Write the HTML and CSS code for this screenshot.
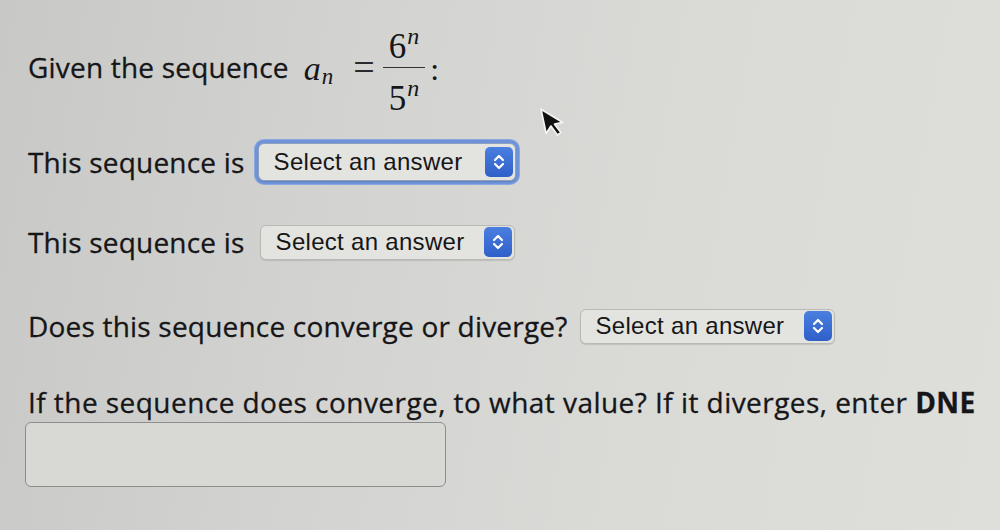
FILE: index.html
```html
<!DOCTYPE html>
<html>
<head>
<meta charset="utf-8">
<link rel="stylesheet" href="styles.css">
</head>
<body>
<div class="page">
  <div class="q1">
    <span class="txt">Given the sequence</span>
    <span class="math">
      <span class="var">a</span><span class="sub">n</span>
      <span class="eq">=</span>
      <span class="frac">
        <span class="num">6<span class="sup">n</span></span>
        <span class="den">5<span class="sup">n</span></span>
      </span>
      <span class="colon">:</span>
    </span>
  </div>

  <div class="row r2">
    <span class="txt">This sequence is</span>
    <span class="ring">
      <span class="select">
        <span class="label">Select an answer</span>
        <span class="stepper"><svg width="14" height="20" viewBox="0 0 14 20"><path d="M3 8 L7 4 L11 8 M3 12 L7 16 L11 12" fill="none" stroke="#fff" stroke-width="2.2" stroke-linecap="round" stroke-linejoin="round"/></svg></span>
      </span>
    </span>
  </div>

  <div class="row r3">
    <span class="txt">This sequence is</span>
    <span class="select">
      <span class="label">Select an answer</span>
      <span class="stepper"><svg width="14" height="20" viewBox="0 0 14 20"><path d="M3 8 L7 4 L11 8 M3 12 L7 16 L11 12" fill="none" stroke="#fff" stroke-width="2.2" stroke-linecap="round" stroke-linejoin="round"/></svg></span>
    </span>
  </div>

  <div class="row r4">
    <span class="txt">Does this sequence converge or diverge?</span>
    <span class="select">
      <span class="label">Select an answer</span>
      <span class="stepper"><svg width="14" height="20" viewBox="0 0 14 20"><path d="M3 8 L7 4 L11 8 M3 12 L7 16 L11 12" fill="none" stroke="#fff" stroke-width="2.2" stroke-linecap="round" stroke-linejoin="round"/></svg></span>
    </span>
  </div>

  <div class="r5">
    <div class="txt long">If the sequence does converge, to what value? If it diverges, enter <b>DNE</b></div>
    <div class="input"></div>
  </div>

  <svg class="cursor" width="28" height="36" viewBox="0 0 24 32">
    <path d="M3 2 L3 24 L8.5 18.5 L12.5 27.5 L16 26 L12 17.5 L19.5 17.5 Z" fill="#111" stroke="#f4f4f4" stroke-width="1.5" stroke-linejoin="round" transform="rotate(-12 10 15)"/>
  </svg>
</div>
</body>
</html>
```

FILE: styles.css
```css
html, body {
  margin: 0;
  padding: 0;
}
body {
  width: 1000px;
  height: 530px;
  overflow: hidden;
  background: linear-gradient(100deg, #c8c9c7 0%, #d3d4d1 35%, #dadad7 65%, #dededa 100%);
  font-family: "Open Sans", "Noto Sans", sans-serif;
  color: #161618;
}
.page {
  position: relative;
  width: 1000px;
  height: 530px;
  padding: 24px 0 0 28px;
  box-sizing: border-box;
}
.txt {
  font-size: 28px;
  line-height: 36px;
  letter-spacing: 0.2px;
  white-space: nowrap;
  -webkit-text-stroke: 0.3px #161618;
}
.txt.long {
  letter-spacing: 0.45px;
}
.q1 {
  display: flex;
  align-items: center;
  height: 86px;
}
.math {
  display: inline-flex;
  align-items: center;
  font-family: "Liberation Serif", serif;
  margin-left: 15px;
}
.var {
  font-style: italic;
  font-size: 34px;
  margin-top: 4px;
}
.sub {
  font-style: italic;
  font-size: 23px;
  margin-top: 20px;
  margin-left: 1px;
}
.eq {
  font-size: 38px;
  margin: 0 8px 0 20px;
  color: #2a2a2a;
}
.frac {
  display: inline-flex;
  flex-direction: column;
  align-items: center;
  font-size: 35px;
}
.num, .den {
  line-height: 40px;
  padding: 0 6px;
}
.num {
  border-bottom: 1.5px solid #333;
}
.sup {
  font-style: italic;
  font-size: 24px;
  vertical-align: 14px;
  margin-left: 1px;
}
.colon {
  font-size: 32px;
  margin-left: 5px;
  margin-top: 4px;
}
.row {
  display: flex;
  align-items: center;
}
.r2 {
  margin-top: 30px;
}
.r3 {
  margin-top: 40px;
}
.r4 {
  margin-top: 48px;
}
.r2 .txt {
  margin-right: 10px;
}
.r3 .txt {
  margin-right: 15px;
}
.r4 .txt {
  margin-right: 12px;
}
.ring {
  display: inline-flex;
  padding: 3px;
  border-radius: 9px;
  background: #6e93d8;
  box-shadow: 0 0 0 1px #8aa7df;
}
.select {
  display: inline-flex;
  align-items: center;
  justify-content: space-between;
  width: 255px;
  height: 35px;
  box-sizing: border-box;
  background: #e3e3e0;
  border: 1px solid #b9b9b6;
  border-radius: 6px;
  padding: 0 2px 0 15px;
  box-shadow: 0 1px 1px rgba(0,0,0,0.12);
}
.ring .select {
  border-color: #8f9fbf;
  height: 38px;
  width: 258px;
}
.label {
  font-family: "Liberation Sans", Arial, sans-serif;
  font-size: 24px;
  color: #161616;
  letter-spacing: 0.3px;
}
.stepper {
  width: 28px;
  height: 30px;
  border-radius: 5px;
  background: linear-gradient(#4a7fe0, #2f5fc8);
  display: flex;
  align-items: center;
  justify-content: center;
}
.r5 {
  margin-top: 40px;
}
.r5 .txt b {
  font-weight: 700;
  letter-spacing: 0.4px;
}
.input {
  width: 421px;
  height: 65px;
  box-sizing: border-box;
  margin-top: 2px;
  margin-left: -3px;
  border: 1.5px solid #8d8d8b;
  border-radius: 6px;
  background: #d8d8d5;
}
.cursor {
  position: absolute;
  left: 540px;
  top: 105px;
}
```
